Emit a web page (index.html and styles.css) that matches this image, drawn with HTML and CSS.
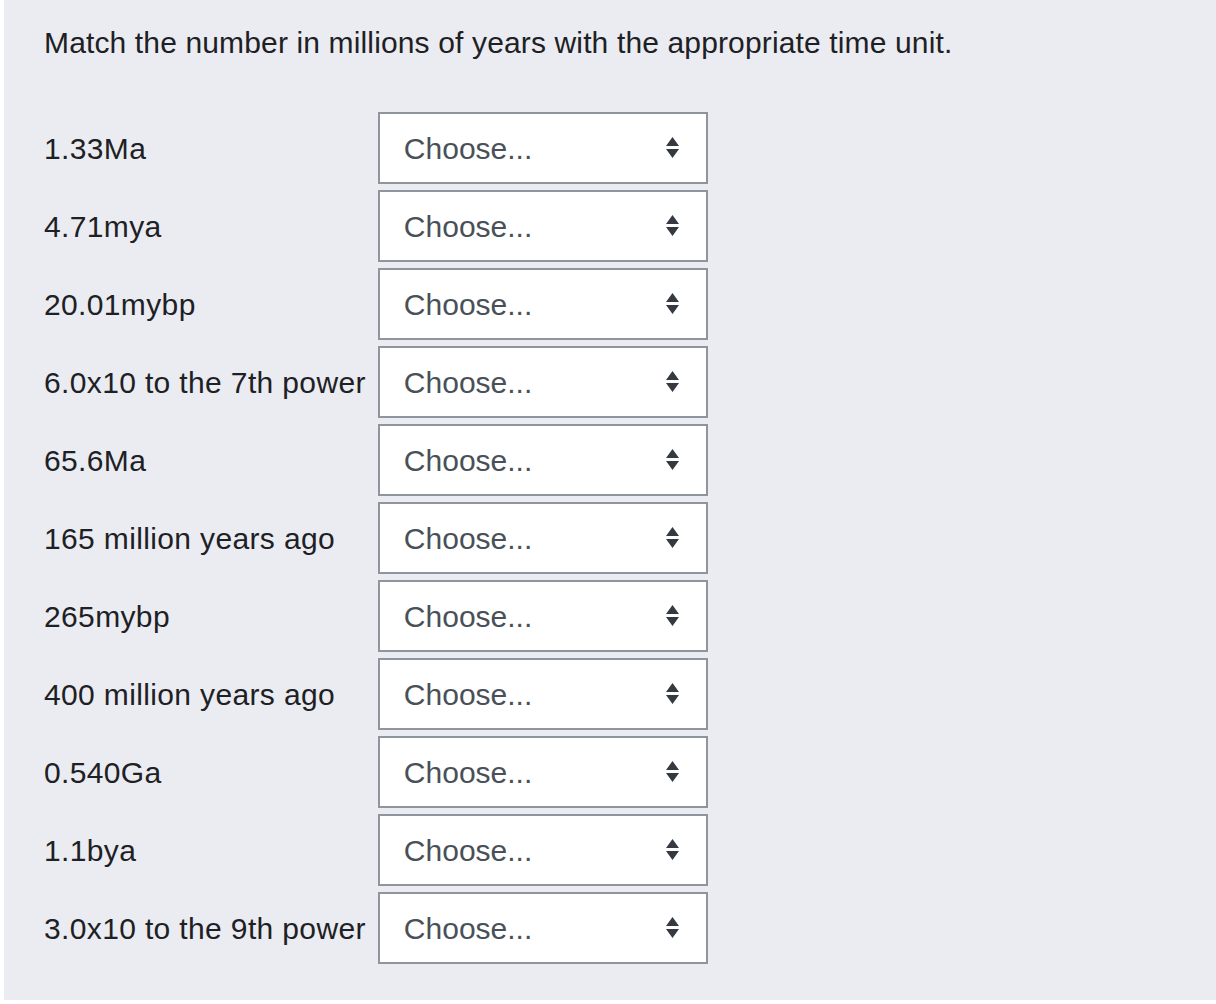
FILE: index.html
```html
<!DOCTYPE html>
<html lang="en">
<head>
<meta charset="utf-8">
<title>Match question</title>
<link rel="stylesheet" href="styles.css">
</head>
<body>
<div class="panel">
  <p class="prompt">Match the number in millions of years with the appropriate time unit.</p>
  <div class="rows">
    <div class="label">1.33Ma</div>
    <div class="choice"><select><option>Choose...</option></select><svg class="arrow" viewBox="0 0 13 21"><path d="M6.5 0L13 9H0Z M0 12H13L6.5 21Z"/></svg></div>
    <div class="label">4.71mya</div>
    <div class="choice"><select><option>Choose...</option></select><svg class="arrow" viewBox="0 0 13 21"><path d="M6.5 0L13 9H0Z M0 12H13L6.5 21Z"/></svg></div>
    <div class="label">20.01mybp</div>
    <div class="choice"><select><option>Choose...</option></select><svg class="arrow" viewBox="0 0 13 21"><path d="M6.5 0L13 9H0Z M0 12H13L6.5 21Z"/></svg></div>
    <div class="label">6.0x10 to the 7th power</div>
    <div class="choice"><select><option>Choose...</option></select><svg class="arrow" viewBox="0 0 13 21"><path d="M6.5 0L13 9H0Z M0 12H13L6.5 21Z"/></svg></div>
    <div class="label">65.6Ma</div>
    <div class="choice"><select><option>Choose...</option></select><svg class="arrow" viewBox="0 0 13 21"><path d="M6.5 0L13 9H0Z M0 12H13L6.5 21Z"/></svg></div>
    <div class="label">165 million years ago</div>
    <div class="choice"><select><option>Choose...</option></select><svg class="arrow" viewBox="0 0 13 21"><path d="M6.5 0L13 9H0Z M0 12H13L6.5 21Z"/></svg></div>
    <div class="label">265mybp</div>
    <div class="choice"><select><option>Choose...</option></select><svg class="arrow" viewBox="0 0 13 21"><path d="M6.5 0L13 9H0Z M0 12H13L6.5 21Z"/></svg></div>
    <div class="label">400 million years ago</div>
    <div class="choice"><select><option>Choose...</option></select><svg class="arrow" viewBox="0 0 13 21"><path d="M6.5 0L13 9H0Z M0 12H13L6.5 21Z"/></svg></div>
    <div class="label">0.540Ga</div>
    <div class="choice"><select><option>Choose...</option></select><svg class="arrow" viewBox="0 0 13 21"><path d="M6.5 0L13 9H0Z M0 12H13L6.5 21Z"/></svg></div>
    <div class="label">1.1bya</div>
    <div class="choice"><select><option>Choose...</option></select><svg class="arrow" viewBox="0 0 13 21"><path d="M6.5 0L13 9H0Z M0 12H13L6.5 21Z"/></svg></div>
    <div class="label">3.0x10 to the 9th power</div>
    <div class="choice"><select><option>Choose...</option></select><svg class="arrow" viewBox="0 0 13 21"><path d="M6.5 0L13 9H0Z M0 12H13L6.5 21Z"/></svg></div>
  </div>
</div>
</body>
</html>
```
FILE: styles.css
```css
html, body {
  margin: 0;
  padding: 0;
  background: #ffffff;
}
body {
  font-family: "Liberation Sans", Arial, Helvetica, sans-serif;
  font-size: 30px;
  color: #1d2125;
}
.panel {
  margin-left: 4px;
  background: #ebecf1;
  height: 1000px;
  box-sizing: border-box;
  padding: 20px 0 0 40px;
}
.prompt {
  margin: 0 0 47px 0;
  line-height: 45px;
  letter-spacing: 0.14px;
}
.rows {
  display: grid;
  grid-template-columns: max-content 330px;
  column-gap: 12px;
  row-gap: 6px;
  align-items: center;
  width: max-content;
}
.label {
  line-height: 45px;
  letter-spacing: 0.36px;
}
.choice {
  position: relative;
  height: 72px;
}
.choice select {
  appearance: none;
  -webkit-appearance: none;
  width: 100%;
  height: 72px;
  box-sizing: border-box;
  border: 2px solid #8f959e;
  border-radius: 0;
  background: #ffffff;
  color: #495057;
  font-family: inherit;
  font-size: 30px;
  padding: 0 0 0 24px;
  margin: 0;
}
.arrow {
  position: absolute;
  right: 29px;
  top: 25px;
  width: 13px;
  height: 21px;
  fill: #343a40;
  pointer-events: none;
}
```
